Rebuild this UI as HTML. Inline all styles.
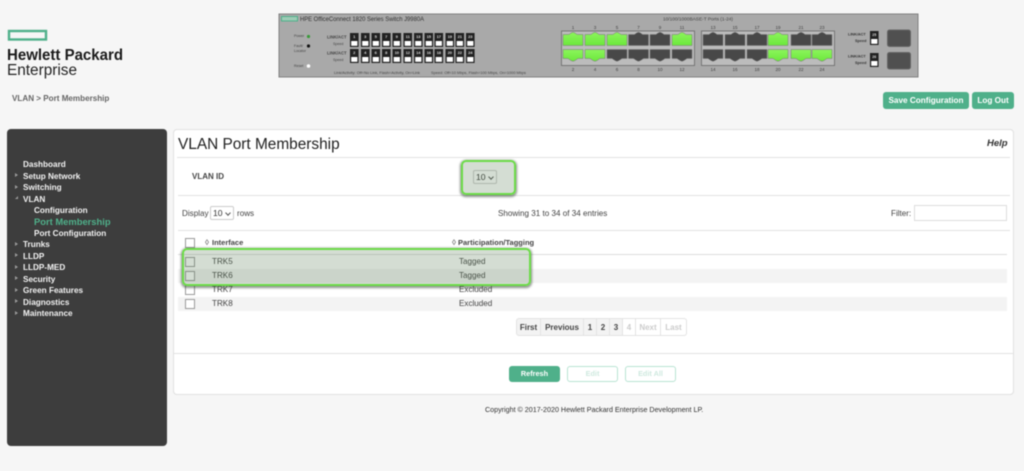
<!DOCTYPE html>
<html lang="en"><head><meta charset="utf-8"><title>VLAN Port Membership</title>
<style>
html,body{margin:0;padding:0}
body{width:1024px;height:471px;overflow:hidden;position:relative;background:#f6f6f6;font-family:"Liberation Sans",sans-serif;color:#444;filter:blur(.45px)}
.a{position:absolute;white-space:nowrap}
.t{position:absolute;white-space:nowrap;line-height:14px;font-size:8.1px}
.b{font-weight:bold}
.nav{color:#f2f2f2;font-weight:bold;font-size:8.2px;left:23px}
.sub{left:34px}
.ar{position:absolute;left:15px;width:0;height:0;border-left:3px solid #999;border-top:2.5px solid transparent;border-bottom:2.5px solid transparent}
.line{position:absolute;height:1px;background:#e2e2e2}
.btn{position:absolute;background:#4fb08a;color:#fff;font-weight:bold;font-size:8.2px;text-align:center;border-radius:3px;box-sizing:border-box}
.off{background:#fff;border:1px solid #b9e3d3;color:#cfe9df;line-height:14px}
.cb{position:absolute;left:185px;width:8px;height:8px;border:1px solid #9a9a9a;background:#fff}
.sel{position:absolute;box-sizing:border-box;border:1px solid #ccc;background:#fff;color:#333;font-size:8.6px;line-height:12px;padding-left:2px;border-radius:2px;white-space:nowrap}
.sel i{position:absolute;right:3px;top:3.500px;width:3px;height:3px;border-right:1px solid #555;border-bottom:1px solid #555;transform:rotate(45deg)}
.pg{position:absolute;top:318px;height:18px;box-sizing:border-box;border:1px solid #e3e3e3;border-left:0;background:#f3f3f3;color:#444;font-weight:bold;font-size:8px;line-height:17px;text-align:center}
.dis{background:#fff;color:#ccc}
.hl{position:absolute;box-sizing:border-box;border:2px solid #6cdc48;border-radius:5px;background:rgba(90,125,85,.26);box-shadow:0 1px 2px 1px rgba(50,60,50,.55)}
</style></head><body>

<svg class="a" style="left:0;top:0" width="140" height="85"><rect x="9" y="31" width="37" height="8.500" fill="none" stroke="#4fb08a" stroke-width="2.400"/><text x="7" y="60" font-family="Liberation Sans" font-weight="bold" font-size="15.500" fill="#1a1a1a" textLength="116" lengthAdjust="spacingAndGlyphs">Hewlett Packard</text><text x="7" y="75" font-family="Liberation Sans" font-size="15.500" fill="#222" textLength="70" lengthAdjust="spacingAndGlyphs">Enterprise</text></svg>
<div class="t b" style="left:12px;top:92px;color:#666;font-size:8.100px">VLAN &gt; Port Membership</div>

<svg class="a" style="left:278px;top:13px" width="642" height="66" viewBox="278 13 642 66" font-family="Liberation Sans">
<defs>
<linearGradient id="g" x1="0" y1="0" x2="0" y2="1"><stop offset="0" stop-color="#8cf55c"/><stop offset="1" stop-color="#6ce83c"/></linearGradient>
<g id="pd"><path d="M-10 -5.500h6l2-1.500q2-1.500 4 0l2 1.500h6v11h-20z" fill="#484848" stroke="#777" stroke-width=".5"/></g>
<g id="pg"><path d="M-10 -5.500h6l2-1.500q2-1.500 4 0l2 1.500h6v11h-20z" fill="url(#g)" stroke="#777" stroke-width=".5"/></g>
<g id="bd"><path d="M-10 -5.500h20v9h-5l-3 2q-2 1.500-4 0l-3-2h-5z" fill="#484848" stroke="#777" stroke-width=".5"/></g>
<g id="bg"><path d="M-10 -5.500h20v9h-5l-3 2q-2 1.500-4 0l-3-2h-5z" fill="url(#g)" stroke="#777" stroke-width=".5"/></g>
<g id="led"><rect x="0" y="0" width="8.600" height="14" fill="#222"/><rect x="1.200" y="8" width="6.200" height="4.800" fill="#fff"/></g>
<g id="sfp"><rect x="0" y="0" width="23" height="16.500" rx="2" fill="#505050" stroke="#666"/></g>
</defs>
<rect x="279" y="14" width="639" height="63" fill="#a9a9a9" stroke="#808080" stroke-width="1"/>
<rect x="281.500" y="16.500" width="16" height="4.500" fill="#9ecbb6" stroke="#4fb08a" stroke-width="1"/>
<text x="300" y="21" font-size="6" fill="#333" textLength="124" lengthAdjust="spacingAndGlyphs">HPE OfficeConnect 1820 Series Switch J9980A</text>
<g font-size="3.600" fill="#444">
<text x="294" y="37">Power</text><text x="294" y="47">Fault/</text><text x="294" y="52">Locator</text><text x="294" y="67">Reset</text>
<text x="327" y="38.500" font-size="4.200" font-weight="bold">LINK/ACT</text><text x="333" y="45">Speed</text>
<text x="327" y="54.500" font-size="4.200" font-weight="bold">LINK/ACT</text><text x="333" y="61">Speed</text>
<text x="334" y="74" textLength="86" lengthAdjust="spacingAndGlyphs">Link/Activity: Off=No Link, Flash=Activity, On=Link</text>
<text x="431" y="74" textLength="95" lengthAdjust="spacingAndGlyphs">Speed: Off=10 Mbps, Flash=100 Mbps, On=1000 Mbps</text>
</g>
<circle cx="308.500" cy="36.500" r="1.600" fill="#3a9a3a"/><circle cx="308.500" cy="46" r="1.600" fill="#111"/><circle cx="308.500" cy="66" r="1.800" fill="#fff"/>
<use href="#led" x="350" y="33"/><use href="#led" x="361" y="33"/><use href="#led" x="371.500" y="33"/><use href="#led" x="382" y="33"/><use href="#led" x="392.500" y="33"/><use href="#led" x="403.500" y="33"/><use href="#led" x="414" y="33"/><use href="#led" x="424.500" y="33"/><use href="#led" x="434.500" y="33"/><use href="#led" x="445.500" y="33"/><use href="#led" x="455.500" y="33"/><use href="#led" x="466" y="33"/>
<use href="#led" x="350" y="49"/><use href="#led" x="361" y="49"/><use href="#led" x="371.500" y="49"/><use href="#led" x="382" y="49"/><use href="#led" x="392.500" y="49"/><use href="#led" x="403.500" y="49"/><use href="#led" x="414" y="49"/><use href="#led" x="424.500" y="49"/><use href="#led" x="434.500" y="49"/><use href="#led" x="445.500" y="49"/><use href="#led" x="455.500" y="49"/><use href="#led" x="466" y="49"/>
<g font-size="4" font-weight="bold" fill="#ddd" text-anchor="middle">
<text x="354.300" y="38">1</text><text x="365.300" y="38">3</text><text x="375.800" y="38">5</text><text x="386.300" y="38">7</text><text x="396.800" y="38">9</text><text x="407.800" y="38">11</text><text x="418.300" y="38">13</text><text x="428.800" y="38">15</text><text x="438.800" y="38">17</text><text x="449.800" y="38">19</text><text x="459.800" y="38">21</text><text x="470.300" y="38">23</text>
<text x="354.300" y="54">2</text><text x="365.300" y="54">4</text><text x="375.800" y="54">6</text><text x="386.300" y="54">8</text><text x="396.800" y="54">10</text><text x="407.800" y="54">12</text><text x="418.300" y="54">14</text><text x="428.800" y="54">16</text><text x="438.800" y="54">18</text><text x="449.800" y="54">20</text><text x="459.800" y="54">22</text><text x="470.300" y="54">24</text>
</g>
<text x="663" y="20.500" font-size="4.200" fill="#444" textLength="70" lengthAdjust="spacingAndGlyphs">10/100/1000BASE-T Ports (1-24)</text>
<rect x="561.500" y="31" width="133" height="34.500" fill="#bcbcbc" stroke="#777"/><rect x="701.500" y="31" width="133" height="34.500" fill="#bcbcbc" stroke="#777"/>
<use href="#pg" x="573" y="40"/><use href="#pg" x="595" y="40"/><use href="#pg" x="617" y="40"/><use href="#pd" x="638.500" y="40"/><use href="#pd" x="660" y="40"/><use href="#pg" x="682" y="40"/>
<use href="#pd" x="713" y="40"/><use href="#pd" x="735" y="40"/><use href="#pd" x="757" y="40"/><use href="#pg" x="778" y="40"/><use href="#pd" x="801" y="40"/><use href="#pd" x="822" y="40"/>
<use href="#bg" x="573" y="55"/><use href="#bg" x="595" y="55"/><use href="#bd" x="617" y="55"/><use href="#bd" x="638.500" y="55"/><use href="#bd" x="660" y="55"/><use href="#bd" x="682" y="55"/>
<use href="#bd" x="713" y="55"/><use href="#bd" x="735" y="55"/><use href="#bd" x="757" y="55"/><use href="#bg" x="778" y="55"/><use href="#bg" x="801" y="55"/><use href="#bg" x="822" y="55"/>
<g font-size="4.600" fill="#444" text-anchor="middle">
<text x="573" y="29">1</text><text x="595" y="29">3</text><text x="617" y="29">5</text><text x="638.500" y="29">7</text><text x="660" y="29">9</text><text x="682" y="29">11</text><text x="713" y="29">13</text><text x="735" y="29">15</text><text x="757" y="29">17</text><text x="778" y="29">19</text><text x="801" y="29">21</text><text x="822" y="29">23</text>
<text x="573" y="71">2</text><text x="595" y="71">4</text><text x="617" y="71">6</text><text x="638.500" y="71">8</text><text x="660" y="71">10</text><text x="682" y="71">12</text><text x="713" y="71">14</text><text x="735" y="71">16</text><text x="757" y="71">18</text><text x="778" y="71">20</text><text x="801" y="71">22</text><text x="822" y="71">24</text>
</g>
<g font-size="3.800" fill="#333" font-weight="bold"><text x="848" y="35.500">LINK/ACT</text><text x="855" y="42">Speed</text><text x="848" y="57.500">LINK/ACT</text><text x="855" y="64">Speed</text></g>
<use href="#led" x="870" y="31"/><use href="#led" x="870" y="53"/>
<g font-size="3.600" fill="#ddd" font-weight="bold" text-anchor="middle"><text x="874.300" y="36">25</text><text x="874.300" y="58">26</text></g>
<use href="#sfp" x="887.500" y="30"/><use href="#sfp" x="887.500" y="52.500"/>
</svg>

<div class="btn" style="left:883px;top:92px;width:86px;height:17px;line-height:17px">Save Configuration</div>
<div class="btn" style="left:972px;top:92px;width:42px;height:17px;line-height:17px">Log Out</div>

<div class="a" style="left:7px;top:129px;width:160px;height:317px;background:#3d3d3d;border-radius:4px"></div>
<div class="t nav" style="top:158px">Dashboard</div>
<i class="ar" style="top:173px"></i><div class="t nav" style="top:169.500px">Setup Network</div>
<i class="ar" style="top:184.500px"></i><div class="t nav" style="top:181px">Switching</div>
<i class="a" style="left:15px;top:196px;width:0;height:0;border-right:3px solid #999;border-top:3px solid transparent"></i><div class="t nav" style="top:192.500px">VLAN</div>
<div class="t nav sub" style="top:204px">Configuration</div>
<div class="t nav sub" style="top:214.500px;color:#4fb08a;font-size:9.400px">Port Membership</div>
<div class="t nav sub" style="top:227px">Port Configuration</div>
<i class="ar" style="top:241.500px"></i><div class="t nav" style="top:238px">Trunks</div>
<i class="ar" style="top:253px"></i><div class="t nav" style="top:249.500px">LLDP</div>
<i class="ar" style="top:264.500px"></i><div class="t nav" style="top:261px">LLDP-MED</div>
<i class="ar" style="top:276px"></i><div class="t nav" style="top:272.500px">Security</div>
<i class="ar" style="top:287.500px"></i><div class="t nav" style="top:284px">Green Features</div>
<i class="ar" style="top:299px"></i><div class="t nav" style="top:295.500px">Diagnostics</div>
<i class="ar" style="top:310.500px"></i><div class="t nav" style="top:307px">Maintenance</div>

<div class="a" style="left:173px;top:129px;width:839px;height:264px;background:#fff;border:1px solid #e0e0e0;border-radius:4px"></div>
<div class="a" style="left:178px;top:136px;font-size:15.400px;line-height:18px;color:#222">VLAN Port Membership</div>
<div class="t b" style="left:987px;top:137px;font-style:italic;font-size:9.500px;color:#333">Help</div>
<div class="line" style="left:177px;top:157px;width:833px"></div>
<div class="t b" style="left:192px;top:170px;font-size:8px">VLAN ID</div>
<div class="sel" style="left:473px;top:170px;width:24px;height:14px">10<i></i></div>
<div class="line" style="left:178px;top:195px;width:832px"></div>
<div class="t" style="left:182px;top:207px">Display</div>
<div class="sel" style="left:210px;top:206px;width:24px;height:14px">10<i></i></div>
<div class="t" style="left:237px;top:207px">rows</div>
<div class="t" style="left:498px;top:207px">Showing 31 to 34 of 34 entries</div>
<div class="t" style="left:891px;top:207px">Filter:</div>
<div class="a" style="left:914px;top:205px;width:91px;height:14px;background:#fff;border:1px solid #ddd"></div>
<div class="line" style="left:178px;top:230px;width:832px"></div>
<div class="a" style="left:178px;top:269px;width:829px;height:14px;background:#f3f3f3"></div>
<div class="a" style="left:178px;top:297px;width:829px;height:14px;background:#f3f3f3"></div>
<div class="line" style="left:178px;top:254px;width:829px;background:#ddd"></div>
<div class="cb" style="top:238px"></div><div class="cb" style="top:257px"></div><div class="cb" style="top:271px"></div><div class="cb" style="top:285px"></div><div class="cb" style="top:299px"></div>
<div class="t b" style="left:205px;top:236px;font-size:8px;color:#777">◊</div>
<div class="t b" style="left:212px;top:236px;font-size:7.500px">Interface</div>
<div class="t b" style="left:452px;top:236px;font-size:8px;color:#777">◊</div>
<div class="t b" style="left:458px;top:236px;font-size:7.500px">Participation/Tagging</div>
<div class="t" style="left:212px;top:255px">TRK5</div><div class="t" style="left:459px;top:255px">Tagged</div>
<div class="t" style="left:212px;top:269px">TRK6</div><div class="t" style="left:459px;top:269px">Tagged</div>
<div class="t" style="left:212px;top:283px">TRK7</div><div class="t" style="left:459px;top:283px">Excluded</div>
<div class="t" style="left:212px;top:297px">TRK8</div><div class="t" style="left:459px;top:297px">Excluded</div>
<div class="hl" style="left:182px;top:248px;width:349px;height:38px"></div>
<div class="hl" style="left:461px;top:160px;width:55px;height:35px"></div>

<div class="pg" style="left:516px;width:25px;border-left:1px solid #e3e3e3;border-radius:3px 0 0 3px">First</div>
<div class="pg" style="left:541px;width:43px">Previous</div>
<div class="pg" style="left:584px;width:13px">1</div>
<div class="pg" style="left:597px;width:13px">2</div>
<div class="pg" style="left:610px;width:13px">3</div>
<div class="pg dis" style="left:623px;width:13px">4</div>
<div class="pg dis" style="left:636px;width:25px">Next</div>
<div class="pg dis" style="left:661px;width:26px;border-radius:0 3px 3px 0">Last</div>

<div class="line" style="left:174px;top:353px;width:840px"></div>
<div class="btn" style="left:509px;top:366px;width:51px;height:16px;line-height:16px;font-size:7.300px">Refresh</div>
<div class="btn off" style="left:567px;top:366px;width:51px;height:16px;font-size:7.300px">Edit</div>
<div class="btn off" style="left:625px;top:366px;width:51px;height:16px;font-size:7.300px">Edit All</div>
<div class="t" style="left:485px;top:403px;font-size:7.150px;color:#333">Copyright © 2017-2020 Hewlett Packard Enterprise Development LP.</div>
</body></html>
